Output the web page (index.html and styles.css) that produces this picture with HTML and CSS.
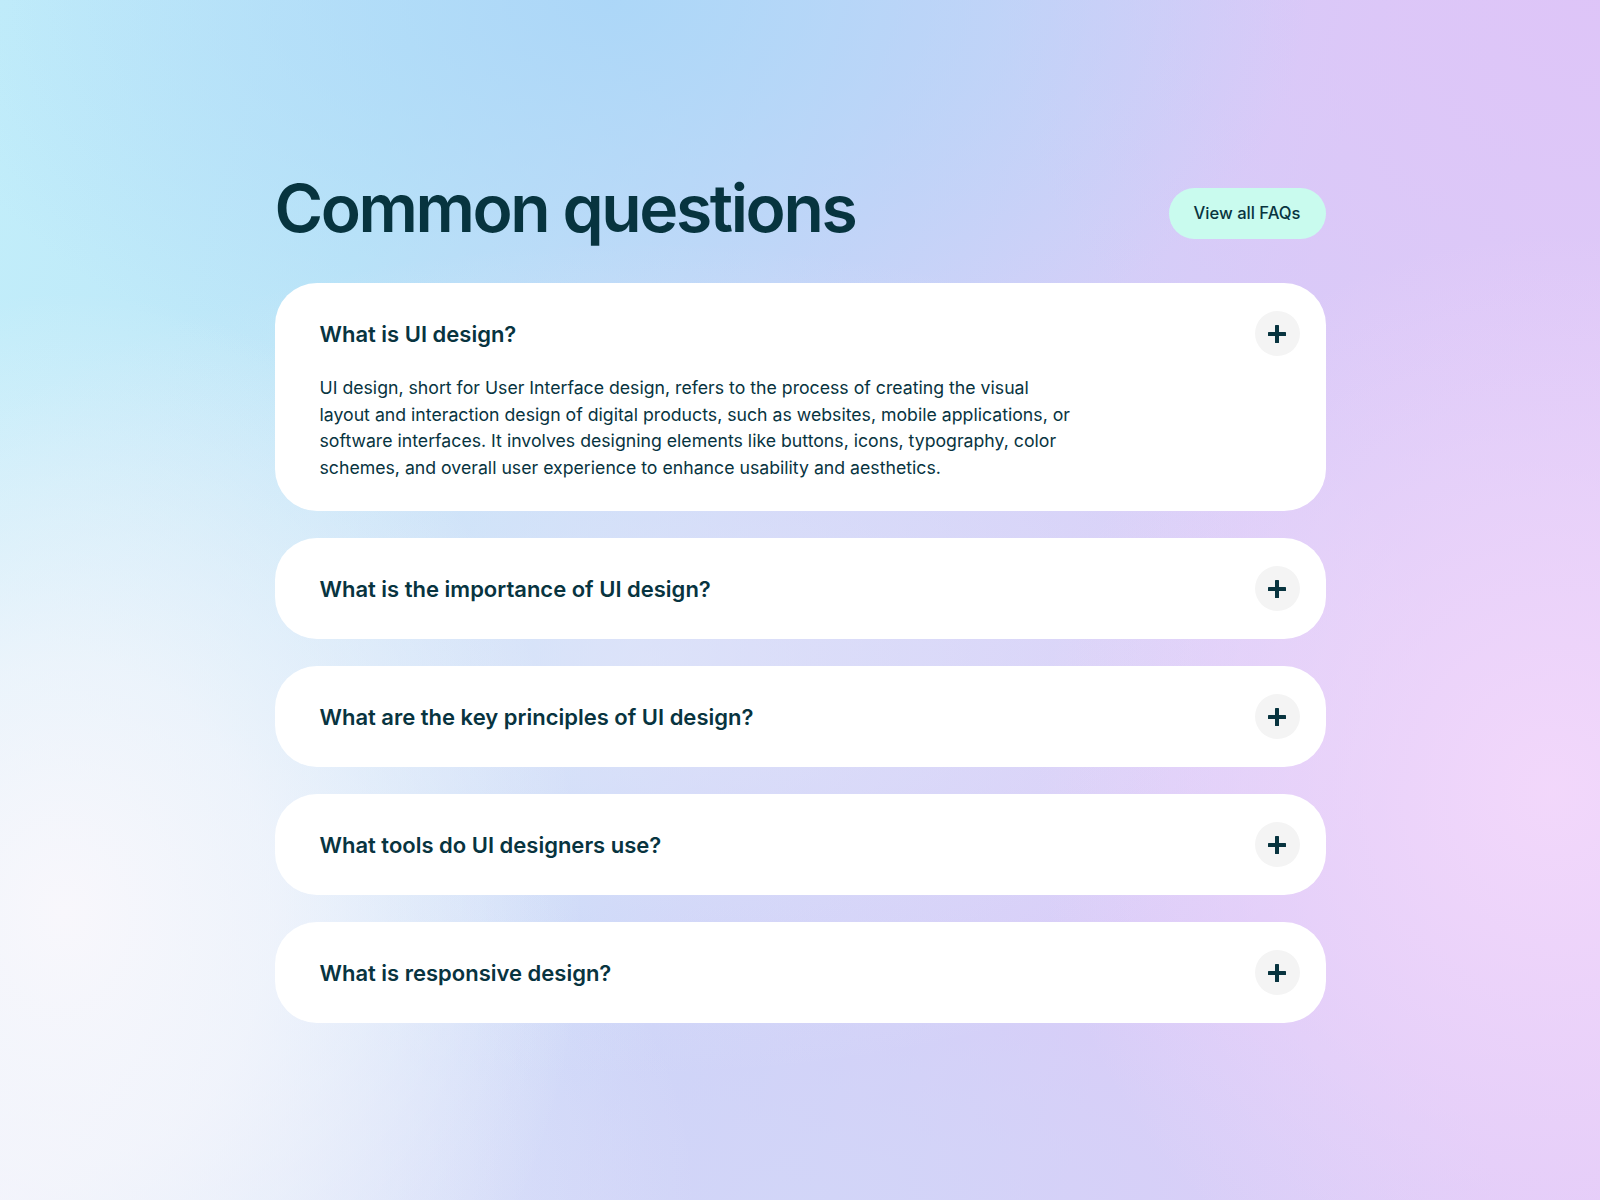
FILE: index.html
```html
<!DOCTYPE html>
<html lang="en">
<head>
<meta charset="utf-8">
<title>Common questions</title>
<link rel="stylesheet" href="styles.css">
</head>
<body>
<main class="page">
  <section class="faq">
    <header class="faq-header">
      <h1 class="faq-title">Common questions</h1>
      <a class="faq-all" href="#">View all FAQs</a>
    </header>
    <div class="faq-list">
      <div class="faq-item open">
        <div class="faq-q">
          <span class="faq-q-text">What is UI design?</span>
          <span class="faq-toggle"><svg viewBox="0 0 18 18" width="18" height="18"><rect x="0" y="7" width="18" height="4" rx="0.6"/><rect x="7" y="0" width="4" height="18" rx="0.6"/></svg></span>
        </div>
        <p class="faq-a">UI design, short for User Interface design, refers to the process of creating the visual layout and interaction design of digital products, such as websites, mobile applications, or software interfaces. It involves designing elements like buttons, icons, typography, color schemes, and overall user experience to enhance usability and aesthetics.</p>
      </div>
      <div class="faq-item">
        <div class="faq-q">
          <span class="faq-q-text">What is the importance of UI design?</span>
          <span class="faq-toggle"><svg viewBox="0 0 18 18" width="18" height="18"><rect x="0" y="7" width="18" height="4" rx="0.6"/><rect x="7" y="0" width="4" height="18" rx="0.6"/></svg></span>
        </div>
      </div>
      <div class="faq-item">
        <div class="faq-q">
          <span class="faq-q-text">What are the key principles of UI design?</span>
          <span class="faq-toggle"><svg viewBox="0 0 18 18" width="18" height="18"><rect x="0" y="7" width="18" height="4" rx="0.6"/><rect x="7" y="0" width="4" height="18" rx="0.6"/></svg></span>
        </div>
      </div>
      <div class="faq-item">
        <div class="faq-q">
          <span class="faq-q-text">What tools do UI designers use?</span>
          <span class="faq-toggle"><svg viewBox="0 0 18 18" width="18" height="18"><rect x="0" y="7" width="18" height="4" rx="0.6"/><rect x="7" y="0" width="4" height="18" rx="0.6"/></svg></span>
        </div>
      </div>
      <div class="faq-item">
        <div class="faq-q">
          <span class="faq-q-text">What is responsive design?</span>
          <span class="faq-toggle"><svg viewBox="0 0 18 18" width="18" height="18"><rect x="0" y="7" width="18" height="4" rx="0.6"/><rect x="7" y="0" width="4" height="18" rx="0.6"/></svg></span>
        </div>
      </div>
    </div>
  </section>
</main>
</body>
</html>
```
FILE: styles.css
```css
* { box-sizing: border-box; }
html, body { margin: 0; padding: 0; }
body {
  font-family: Inter, "Noto Sans", "Liberation Sans", sans-serif;
  color: #08343f;
  min-height: 1200px;
  background:
    radial-gradient(ellipse 520px 620px at 4% 76%, rgba(248,247,252,1) 0%, rgba(248,247,252,0.75) 40%, rgba(248,247,252,0) 100%),
    radial-gradient(ellipse 700px 500px at 0% 100%, rgba(238,239,251,0.9) 0%, rgba(238,239,251,0) 100%),
    radial-gradient(ellipse 520px 560px at 97% 66%, rgba(243,216,251,0.95) 0%, rgba(243,216,251,0) 100%),
    radial-gradient(ellipse 800px 420px at 40% 55%, rgba(236,236,250,0.55) 0%, rgba(236,236,250,0) 100%),
    radial-gradient(ellipse 700px 300px at 50% 100%, rgba(210,214,248,0.9) 0%, rgba(210,214,248,0) 100%),
    radial-gradient(ellipse 700px 420px at 38% 0%, rgba(170,214,248,0.9) 0%, rgba(170,214,248,0) 100%),
    radial-gradient(ellipse 600px 500px at 100% 0%, rgba(222,196,248,0.9) 0%, rgba(222,196,248,0) 100%),
    linear-gradient(105deg, #c2eefa 0%, #bde6f8 22%, #ccd3f8 48%, #d9cbf8 72%, #e2cbf8 100%);
}
.page {
  padding-top: 174px;
  display: flex;
  justify-content: center;
}
.faq { width: 1051px; }
.faq-header {
  display: flex;
  justify-content: space-between;
  align-items: center;
  margin-bottom: 41px;
}
.faq-title {
  margin: 0;
  font-size: 66px;
  line-height: 68px;
  font-weight: 600;
  letter-spacing: -2.4px;
  color: #07343f;
}
.faq-all {
  margin-top: 10px;
  display: inline-flex;
  align-items: center;
  height: 51px;
  padding: 0 25px;
  border-radius: 26px;
  background: #c9fbee;
  color: #08343f;
  text-decoration: none;
  font-size: 16.6px;
  font-weight: 500;
}
.faq-list {
  display: flex;
  flex-direction: column;
  gap: 27px;
}
.faq-item {
  background: #ffffff;
  border-radius: 42px;
  padding: 28px 26px 30px 45px;
}
.faq-item:not(.open) { padding-bottom: 28px; }
.faq-q {
  display: flex;
  align-items: center;
  justify-content: space-between;
  min-height: 45px;
}
.faq-q-text {
  font-size: 22px;
  font-weight: 600;
  color: #08343f;
}
.faq-toggle {
  width: 45px;
  height: 45px;
  border-radius: 50%;
  background: #f4f4f4;
  display: flex;
  align-items: center;
  justify-content: center;
}
.faq-toggle svg { fill: #08343f; display: block; }
.faq-a {
  margin: 19px 0 0;
  max-width: 757px;
  font-size: 17.7px;
  line-height: 26.5px;
  font-weight: 400;
  color: #08343f;
}
```
